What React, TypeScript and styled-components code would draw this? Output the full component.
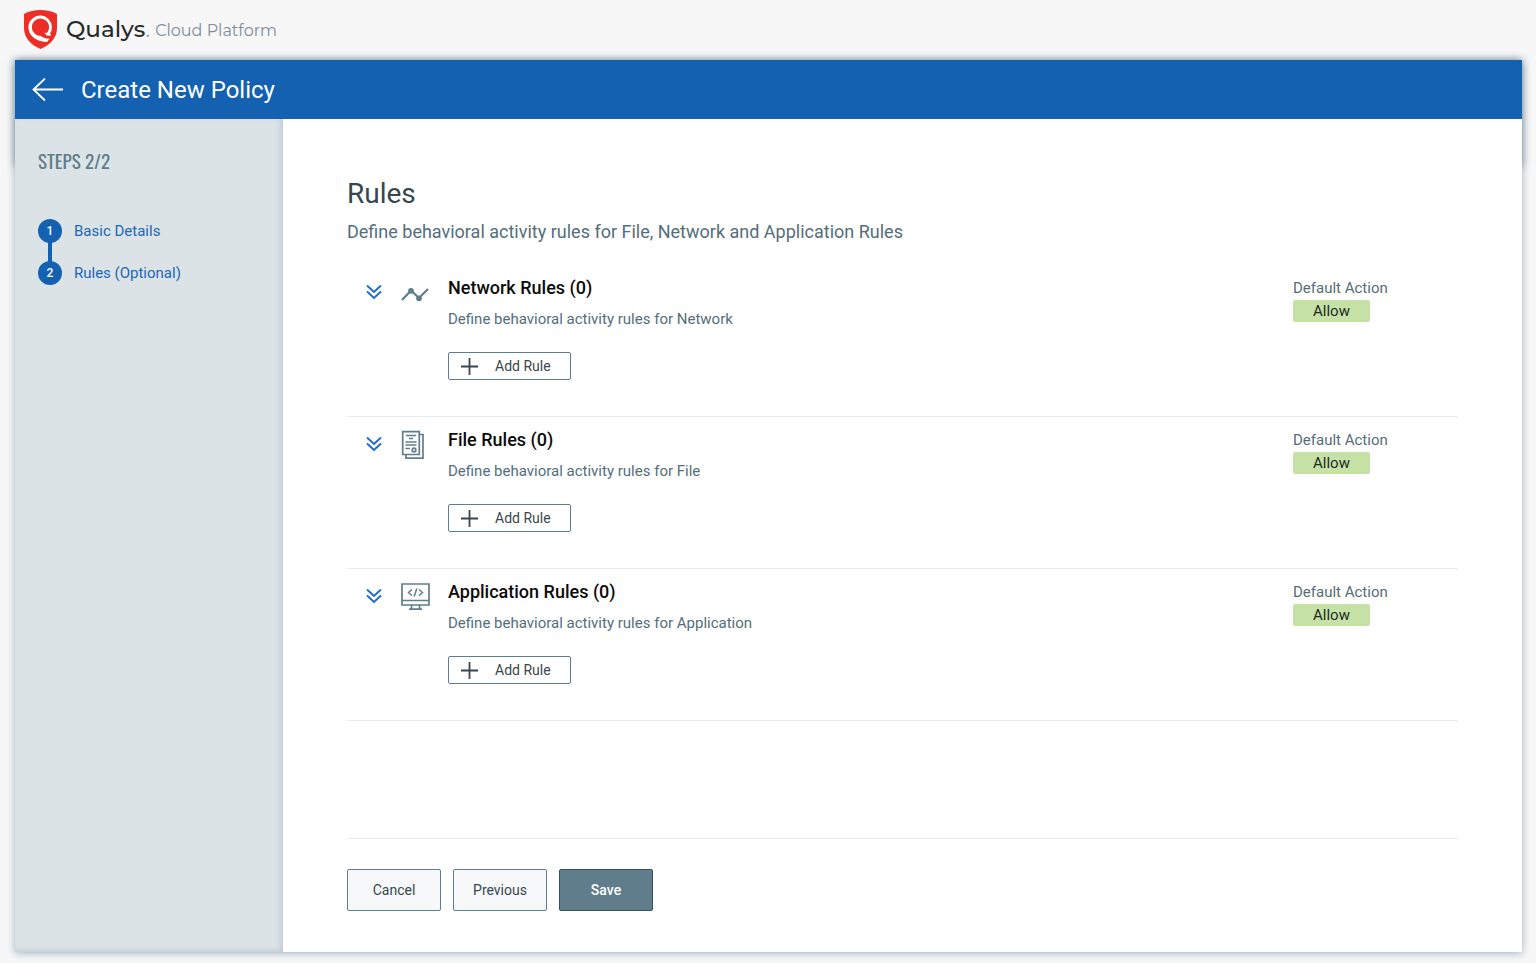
import type { ReactNode } from "react";
import styled, { createGlobalStyle } from "styled-components";

const GlobalStyle = createGlobalStyle`
  *, *::before, *::after { box-sizing: border-box; }
  body {
    margin: 0;
    background: #f7f7f7;
    font-family: Roboto, "Liberation Sans", sans-serif;
    color: #37474f;
  }
  h1, h2, h3, p, ol { margin: 0; padding: 0; font-weight: 400; }
`;

const Page = styled.div`
  display: flex;
  flex-direction: column;
  min-height: 100vh;
  padding: 0 14px 11px 15px;
`;

const BrandBar = styled.header`
  display: flex;
  align-items: center;
  height: 60px;
  padding: 0 0 2px 9px;
  font-family: Montserrat, Lato, "Open Sans", sans-serif;
`;

const BrandName = styled.span`
  margin-left: 9px;
  font-size: 23px;
  font-weight: 500;
  line-height: 32px;
  color: #27292b;
`;

const BrandDot = styled.span`
  font-weight: 400;
  color: #9aa3ab;
`;

const BrandProduct = styled.span`
  margin: 4px 0 0 5px;
  font-size: 16px;
  line-height: 24px;
  color: #7f8c9d;
`;

const Wizard = styled.div`
  position: relative;
  z-index: 0;
  display: flex;
  flex: 1;
  flex-direction: column;
  box-shadow: 0 1px 8px #9fb0bc;

  &::before {
    content: "";
    position: absolute;
    z-index: -1;
    inset: 0 0 auto;
    height: 106px;
    box-shadow: 0 0 8px #7f939f;
  }
`;

const TitleBar = styled.div`
  display: flex;
  align-items: center;
  gap: 17px;
  height: 59px;
  padding: 0 17px;
  background: #1461b1;
  color: #fff;
`;

const BackButton = styled.button`
  display: flex;
  padding: 0;
  border: 0;
  background: none;
  color: inherit;
  cursor: pointer;
`;

const WizardTitle = styled.h1`
  font-size: 24px;
  line-height: 32px;
`;

const Body = styled.div`
  display: flex;
  flex: 1;
`;

const Sidebar = styled.nav`
  flex: 0 0 268px;
  padding: 27px 23px;
  background: #dce3e7;
  box-shadow: inset -3px -2px 6px -1px #bcc8d1;
`;

const StepCount = styled.h2`
  font-family: Oswald, "Liberation Sans Narrow", "Roboto Condensed", sans-serif;
  font-size: 19px;
  line-height: 28px;
  color: #607d8b;
`;

const StepList = styled.ol`
  display: flex;
  flex-direction: column;
  gap: 18px;
  margin-top: 45px;
  list-style: none;
`;

const Step = styled.li`
  position: relative;
  display: flex;
  align-items: center;
  gap: 12px;
  height: 24px;

  & + &::before {
    content: "";
    position: absolute;
    bottom: 23px;
    left: 10px;
    width: 4px;
    height: 20px;
    background: #1461b1;
  }
`;

const StepNumber = styled.span`
  display: grid;
  place-items: center;
  width: 24px;
  height: 24px;
  border-radius: 50%;
  background: #1461b1;
  color: #fff;
  font-size: 12px;
  font-weight: 500;
`;

const StepLink = styled.a`
  font-size: 15px;
  line-height: 24px;
  color: #1b67b8;
  text-decoration: none;
`;

const Content = styled.main`
  display: flex;
  flex: 1;
  flex-direction: column;
  min-width: 0;
  padding: 56px 64px 41px;
  background: #fff;
`;

const ContentTitle = styled.h2`
  font-size: 28px;
  line-height: 38px;
`;

const Intro = styled.p`
  margin-top: 6px;
  font-size: 18px;
  line-height: 26px;
  color: #546e7a;
`;

const RuleList = styled.div`
  margin-top: 20px;
`;

const RuleRow = styled.section`
  display: flex;
  align-items: flex-start;
  height: 152px;
  padding: 11px 0 0 19px;
  border-bottom: 1px solid #e8ebed;
`;

const ExpandButton = styled.button`
  display: flex;
  margin: 8px 19px 0 0;
  padding: 0;
  border: 0;
  background: none;
  color: #1b6ac9;
  cursor: pointer;
`;

const RuleIcon = styled.span`
  display: flex;
  width: 47px;
  padding-top: 2px;
  color: #607d8b;
`;

const RuleText = styled.div`
  flex: 1;
`;

const RuleTitle = styled.h3`
  font-size: 18px;
  font-weight: 500;
  line-height: 24px;
  color: #0b0b0b;
`;

const RuleDescription = styled.p`
  margin: 7px 0 21px;
  font-size: 15px;
  line-height: 24px;
  color: #546e7a;
`;

const AddButton = styled.button`
  display: flex;
  align-items: center;
  gap: 17px;
  width: 123px;
  height: 28px;
  padding: 0 12px;
  border: 1px solid #607d8b;
  border-radius: 2px;
  background: #fff;
  color: #37474f;
  font: 400 14px Roboto, sans-serif;
  cursor: pointer;
`;

const DefaultAction = styled.div`
  flex: 0 0 165px;
  font-size: 15px;
  line-height: 24px;
  color: #546e7a;
`;

const ActionBadge = styled.span`
  display: block;
  width: 77px;
  height: 22px;
  border-radius: 2px;
  background: #c5e1a5;
  color: #212b22;
  line-height: 22px;
  text-align: center;
`;

const Actions = styled.footer`
  display: flex;
  gap: 12px;
  margin-top: auto;
  padding-top: 30px;
  border-top: 1px solid #e8ebed;
`;

const ActionButton = styled.button<{ $primary?: boolean }>`
  width: 94px;
  height: 42px;
  border: 1px solid ${(p) => (p.$primary ? "#37505e" : "#607d8b")};
  border-radius: 2px;
  background: ${(p) => (p.$primary ? "#607d8b" : "#f6f8fa")};
  color: ${(p) => (p.$primary ? "#fff" : "#37474f")};
  font: ${(p) => (p.$primary ? 500 : 400)} 14px Roboto, sans-serif;
  cursor: pointer;
`;

const Shield = () => (
  <svg width="33" height="39" viewBox="0 0 33 39" aria-hidden="true">
    <path d="M0 4C5 1 11 0 16.500 0S28 1 33 4V18C33 28 26 35 16.500 39C7 35 0 28 0 18Z" fill="#ed2e26" />
    <path
      d="M25.500 24.500A11.800 11.800 0 1 0 5.500 22.500C8 28 15 32 23 32L25.500 28.800C21 28.600 18.500 27.500 16.500 25.800A8.600 8.600 0 1 1 22 23.800Z"
      fill="#fff"
    />
    <path d="M20.500 22.500L22.500 25.500L26.500 25.800L27 24Z" fill="#fff" />
  </svg>
);

const BackArrow = () => (
  <svg width="32" height="24" viewBox="0 0 32 24" fill="none" stroke="currentColor" strokeWidth="1.800" aria-hidden="true">
    <path d="M31 11.500H1.500M13 .5L1.500 11.500L13 22.500" />
  </svg>
);

const DoubleChevron = () => (
  <svg width="16" height="16" viewBox="0 0 16 16" fill="none" stroke="currentColor" strokeWidth="1.800" aria-hidden="true">
    <path d="M1 1.500L8 8L15 1.500M1 7.500L8 14L15 7.500" />
  </svg>
);

const Plus = () => (
  <svg width="17" height="17" viewBox="0 0 17 17" fill="none" stroke="currentColor" strokeWidth="1.800" aria-hidden="true">
    <path d="M8.500 0V17M0 8.500H17" />
  </svg>
);

const NetworkIcon = () => (
  <svg width="28" height="30" viewBox="0 0 28 30" fill="none" stroke="currentColor" strokeWidth="2.200" aria-hidden="true">
    <path d="M1 22L10 12.500L18 20L27 11" />
    <circle cx="10" cy="12.800" r="1.800" fill="currentColor" />
    <circle cx="18" cy="20.300" r="1.800" fill="currentColor" />
  </svg>
);

const FileIcon = () => (
  <svg width="24" height="30" viewBox="0 0 24 30" fill="none" stroke="currentColor" strokeWidth="1.700" aria-hidden="true">
    <path d="M1.700 1.700H18.300V24.500H1.700ZM18.500 4.500H22V28.200H5V25" />
    <path d="M5 5.500H15M8 8.500H12M4.500 12H15.500M4.500 15H15.500M4.500 18.500H9" />
    <circle cx="13" cy="20" r="1.800" />
  </svg>
);

const ApplicationIcon = () => (
  <svg width="29" height="30" viewBox="0 0 29 30" fill="none" stroke="currentColor" strokeWidth="1.700" aria-hidden="true">
    <path d="M1 2H28V23H1ZM1 18.500H28M10.500 23V27M18.500 23V27M8 27.200H21" />
    <path d="M11 7.500L7.500 10.500L11 13.500M18 7.500L21.500 10.500L18 13.500M15.800 6.500L13.200 14.500" strokeWidth="1.500" />
  </svg>
);

const steps = ["Basic Details", "Rules (Optional)"];

const rules: { name: string; icon: ReactNode }[] = [
  { name: "Network", icon: <NetworkIcon /> },
  { name: "File", icon: <FileIcon /> },
  { name: "Application", icon: <ApplicationIcon /> },
];

export default function App() {
  return (
    <Page>
      <GlobalStyle />
      <BrandBar>
        <Shield />
        <BrandName>
          Qualys<BrandDot>.</BrandDot>
        </BrandName>
        <BrandProduct>Cloud Platform</BrandProduct>
      </BrandBar>
      <Wizard>
        <TitleBar>
          <BackButton type="button" aria-label="Back">
            <BackArrow />
          </BackButton>
          <WizardTitle>Create New Policy</WizardTitle>
        </TitleBar>
        <Body>
          <Sidebar>
            <StepCount>STEPS 2/2</StepCount>
            <StepList>
              {steps.map((label, i) => (
                <Step key={label}>
                  <StepNumber>{i + 1}</StepNumber>
                  <StepLink href="#">{label}</StepLink>
                </Step>
              ))}
            </StepList>
          </Sidebar>
          <Content>
            <ContentTitle>Rules</ContentTitle>
            <Intro>Define behavioral activity rules for File, Network and Application Rules</Intro>
            <RuleList>
              {rules.map(({ name, icon }) => (
                <RuleRow key={name}>
                  <ExpandButton type="button" aria-label={`Expand ${name} Rules`}>
                    <DoubleChevron />
                  </ExpandButton>
                  <RuleIcon>{icon}</RuleIcon>
                  <RuleText>
                    <RuleTitle>{name} Rules (0)</RuleTitle>
                    <RuleDescription>Define behavioral activity rules for {name}</RuleDescription>
                    <AddButton type="button">
                      <Plus />
                      Add Rule
                    </AddButton>
                  </RuleText>
                  <DefaultAction>
                    Default Action
                    <ActionBadge>Allow</ActionBadge>
                  </DefaultAction>
                </RuleRow>
              ))}
            </RuleList>
            <Actions>
              <ActionButton type="button">Cancel</ActionButton>
              <ActionButton type="button">Previous</ActionButton>
              <ActionButton type="submit" $primary>
                Save
              </ActionButton>
            </Actions>
          </Content>
        </Body>
      </Wizard>
    </Page>
  );
}
